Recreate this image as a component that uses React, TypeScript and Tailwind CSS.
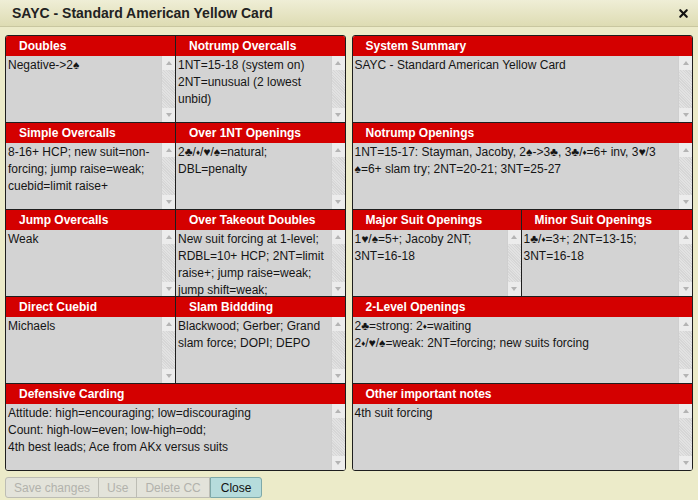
import { X } from "lucide-react";

type CellProps = {
  title: string;
  lines: string[];
  className?: string;
};

// render suit glyphs; the diamond is drawn smaller like the original card
function SuitText({ text }: { text: string }) {
  const parts = text.split(/(♦)/);
  return (
    <>
      {parts.map((p, i) =>
        p === "♦" ? (
          <span key={i} className="text-[8px] align-[1px]">
            ♦
          </span>
        ) : (
          <span key={i}>{p}</span>
        ),
      )}
    </>
  );
}

function Scrollbar() {
  return (
    <div className="w-[14px] shrink-0 flex flex-col bg-[#dcdcdc] border-l border-[#cfcfcf]">
      <div className="h-[14px] bg-[#ececec] flex items-center justify-center">
        <div className="w-0 h-0 border-l-[3px] border-r-[3px] border-b-[4px] border-l-transparent border-r-transparent border-b-[#b4b4b4]" />
      </div>
      <div className="flex-1 bg-[repeating-linear-gradient(45deg,#e2e2e2_0px,#e2e2e2_1px,#d6d6d6_1px,#d6d6d6_2px)]" />
      <div className="h-[14px] bg-[#ececec] flex items-center justify-center">
        <div className="w-0 h-0 border-l-[3px] border-r-[3px] border-t-[4px] border-l-transparent border-r-transparent border-t-[#b4b4b4]" />
      </div>
    </div>
  );
}

function Cell({ title, lines, className = "" }: CellProps) {
  return (
    <div className={`flex flex-col min-w-0 ${className}`}>
      <div className="h-[20px] bg-[#d40000] text-white font-bold text-[12px] leading-[20px] pl-[13px] whitespace-nowrap">
        {title}
      </div>
      <div className="h-[66px] flex bg-[#d3d3d3]">
        <div className="flex-1 min-w-0 overflow-hidden pl-[2px] pt-[1px] text-[12px] leading-[17px] text-[#151515]">
          {lines.map((l, i) => (
            <div key={i} className="whitespace-nowrap">
              <SuitText text={l} />
            </div>
          ))}
        </div>
        <Scrollbar />
      </div>
    </div>
  );
}

function Row({ children }: { children: React.ReactNode }) {
  return <div className="flex divide-x divide-[#1e1e1e]">{children}</div>;
}

export default function App() {
  return (
    <div
      className="w-[698px] h-[500px] bg-[#ecebc9] flex flex-col overflow-hidden"
      style={{ fontFamily: '"Liberation Sans", Arial, sans-serif' }}
    >
      {/* ================= TITLE BAR ================= */}
      <div className="h-[27px] shrink-0 flex items-center justify-between pl-[12px] pr-[8px] bg-gradient-to-b from-[#efeed6] to-[#dedcb3] border-b border-[#c9c7a0]">
        <span className="text-[14px] font-bold text-[#222]">
          SAYC - Standard American Yellow Card
        </span>
        <X size={13} strokeWidth={4} className="text-[#111]" />
      </div>

      {/* ================= CARD ================= */}
      <div className="flex gap-[6px] px-[5px] pt-[8px]">
        {/* left column */}
        <div className="w-[341px] flex flex-col divide-y divide-[#1e1e1e] border border-[#1e1e1e] rounded-[3px] overflow-hidden">
          <Row>
            <Cell className="w-[170px]" title="Doubles" lines={["Negative->2♠"]} />
            <Cell
              className="flex-1"
              title="Notrump Overcalls"
              lines={["1NT=15-18 (system on)", "2NT=unusual (2 lowest", "unbid)"]}
            />
          </Row>
          <Row>
            <Cell
              className="w-[170px]"
              title="Simple Overcalls"
              lines={["8-16+ HCP; new suit=non-", "forcing; jump raise=weak;", "cuebid=limit raise+"]}
            />
            <Cell className="flex-1" title="Over 1NT Openings" lines={["2♣/♦/♥/♠=natural;", "DBL=penalty"]} />
          </Row>
          <Row>
            <Cell className="w-[170px]" title="Jump Overcalls" lines={["Weak"]} />
            <Cell
              className="flex-1"
              title="Over Takeout Doubles"
              lines={[
                "New suit forcing at 1-level;",
                "RDBL=10+ HCP; 2NT=limit",
                "raise+; jump raise=weak;",
                "jump shift=weak;",
              ]}
            />
          </Row>
          <Row>
            <Cell className="w-[170px]" title="Direct Cuebid" lines={["Michaels"]} />
            <Cell className="flex-1" title="Slam Biddding" lines={["Blackwood; Gerber; Grand", "slam force; DOPI; DEPO"]} />
          </Row>
          <Cell
            title="Defensive Carding"
            lines={[
              "Attitude: high=encouraging; low=discouraging",
              "Count: high-low=even; low-high=odd;",
              "4th best leads; Ace from AKx versus suits",
            ]}
          />
        </div>

        {/* right column */}
        <div className="w-[342px] flex flex-col divide-y divide-[#1e1e1e] border border-[#1e1e1e] rounded-[3px] overflow-hidden">
          <Cell title="System Summary" lines={["SAYC - Standard American Yellow Card"]} />
          <Cell
            title="Notrump Openings"
            lines={[
              "1NT=15-17: Stayman, Jacoby, 2♠->3♣, 3♣/♦=6+ inv, 3♥/3",
              "♠=6+ slam try; 2NT=20-21; 3NT=25-27",
            ]}
          />
          <Row>
            <Cell className="w-[169px]" title="Major Suit Openings" lines={["1♥/♠=5+; Jacoby 2NT;", "3NT=16-18"]} />
            <Cell className="flex-1" title="Minor Suit Openings" lines={["1♣/♦=3+; 2NT=13-15;", "3NT=16-18"]} />
          </Row>
          <Cell
            title="2-Level Openings"
            lines={["2♣=strong: 2♦=waiting", "2♦/♥/♠=weak: 2NT=forcing; new suits forcing"]}
          />
          <Cell title="Other important notes" lines={["4th suit forcing"]} />
        </div>
      </div>

      {/* ================= BUTTONS ================= */}
      <div className="flex px-[5px] pt-[6px] text-[12px]">
        <button className="h-[21px] px-[8px] bg-[#e3e3da] text-[#b2b2ac] border border-[#bdbdb4] rounded-l-[3px]">
          Save changes
        </button>
        <button className="h-[21px] px-[8px] bg-[#e3e3da] text-[#b2b2ac] border border-l-0 border-[#bdbdb4]">
          Use
        </button>
        <button className="h-[21px] px-[8px] bg-[#e3e3da] text-[#b2b2ac] border border-l-0 border-[#bdbdb4]">
          Delete CC
        </button>
        <button className="h-[21px] px-[10px] bg-[#b6dcdc] text-[#111] border border-[#7ea9a9] rounded-r-[3px]">
          Close
        </button>
      </div>
    </div>
  );
}
